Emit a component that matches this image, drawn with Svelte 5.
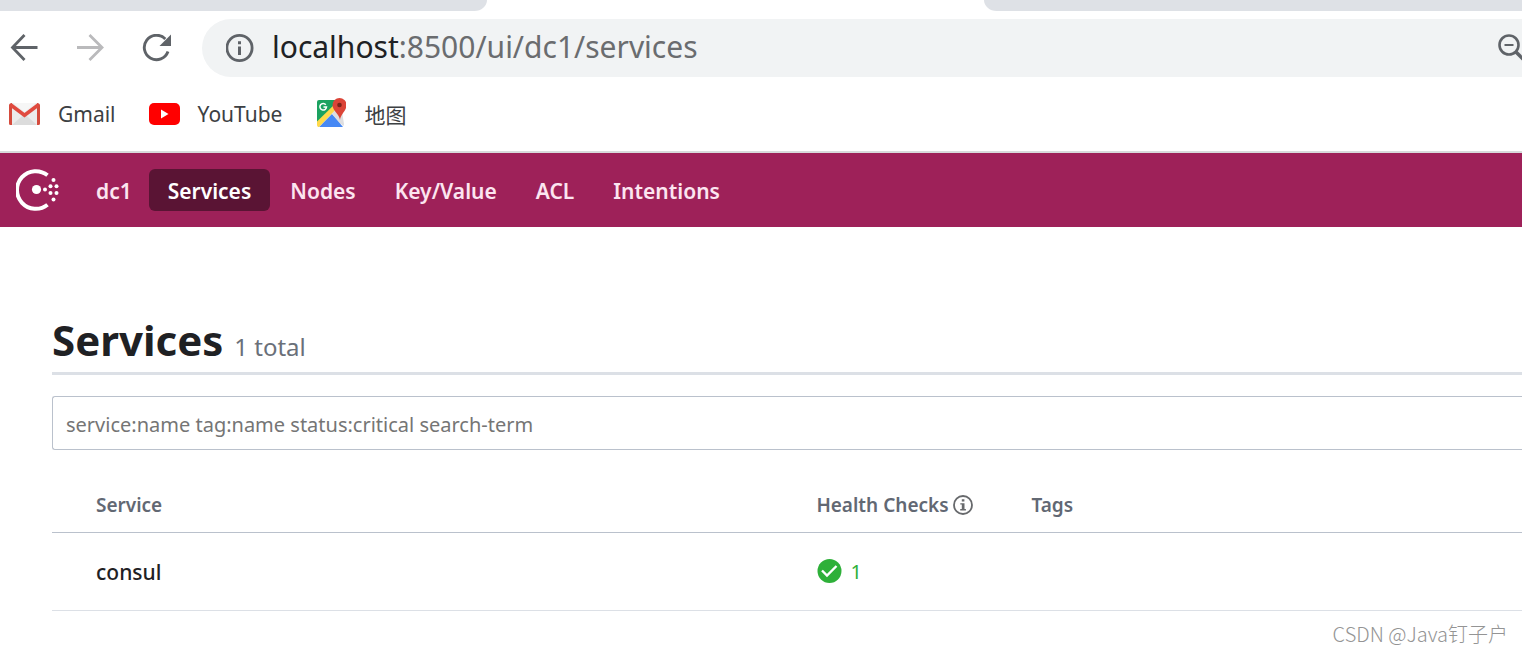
<script>
	let search = ''
	let active = 'Services'

	let bookmarks = [
		{id: 'gmail', name: 'Gmail'},
		{id: 'youtube', name: 'YouTube'},
		{id: 'maps', name: '地图'},
	]
	let links = ['Services', 'Nodes', 'Key/Value', 'ACL', 'Intentions']
	let services = [
		{id: 1, name: 'consul', passing: 1, tags: []},
	]
</script>

<div class="tabs">
	<div class="tab left"></div>
	<div class="current"></div>
	<div class="tab right"></div>
</div>

<div class="toolbar">
	<button class="tool" aria-label="Back">
		<svg width="28" height="28" viewBox="0 0 28 28" fill="none" stroke="#5f6368" stroke-width="2.8">
			<path d="M27.500 13.500H3M14.500 1L2.500 13.500l12 12.500" />
		</svg>
	</button>
	<button class="tool" aria-label="Forward">
		<svg width="28" height="28" viewBox="0 0 28 28" fill="none" stroke="#bababc" stroke-width="2.8">
			<path d="M1 13.500h24.500M13.500 1L26 13.500 13.500 26" />
		</svg>
	</button>
	<button class="tool" aria-label="Reload">
		<svg width="30" height="28" viewBox="0 0 30 28">
			<path d="M26 17.500A12.200 12.200 0 1 1 23.300 5" fill="none" stroke="#5f6368" stroke-width="2.9" />
			<path d="M29 .5v11.500H17.500z" fill="#5f6368" />
		</svg>
	</button>
	<div class="omnibox">
		<button class="tool" aria-label="View site information">
			<svg width="28" height="28" viewBox="0 0 28 28">
				<circle cx="13.500" cy="14" r="12.600" fill="none" stroke="#5f6368" stroke-width="2.8" />
				<path d="M12 7.200h3v3h-3zM12 12.500h3v8.500h-3z" fill="#5f6368" />
			</svg>
		</button>
		<div class="url" role="textbox" tabindex="0" aria-label="Address" contenteditable="true"><span>localhost</span>:8500/ui/dc1/services</div>
		<button class="tool zoom" aria-label="Zoom">
			<svg width="24" height="30" viewBox="0 0 24 30" fill="none" stroke="#5f6368">
				<circle cx="11" cy="12" r="9.500" stroke-width="2.6" />
				<path d="M6.500 12h9" stroke-width="2" />
				<path d="M17.500 18.500l8 8" stroke-width="3.6" />
			</svg>
		</button>
	</div>
</div>

<nav class="bookmarks" aria-label="Bookmarks">
	{#each bookmarks as b (b.id)}
		<a href="#{b.id}">
			{#if b.id === 'gmail'}
				<svg width="32" height="32" viewBox="0 0 32 32">
					<path d="M3 5h27v22H3z" fill="#ececec" />
					<path d="M4 27l12.500-11L29 27z" fill="#dcdcdc" />
					<path d="M5 5h23L16.500 14z" fill="#f6f6f6" />
					<path d="M1 7.500Q1 5 4 5v22H2.500Q1 27 1 25.500zM32 7.500Q32 5 29 5v22h1.500q1.500 0 1.500-1.500z" fill="#d54b3d" />
					<path d="M2.500 6.800l14 10.500 14-10.500" fill="none" stroke="#e04a3f" stroke-width="3.6" />
				</svg>
			{:else if b.id === 'youtube'}
				<svg width="32" height="32" viewBox="0 0 32 32">
					<rect x="1" y="5" width="31" height="22" rx="5" fill="#f00" />
					<path d="M13 11.500v9l7.500-4.500z" fill="#fff" />
				</svg>
			{:else}
				<svg width="32" height="32" viewBox="-1 2 32 32">
					<path d="M4 4h22v24H4z" fill="#e4e4e6" />
					<path d="M2 6q0-2 2-2h21L2 27z" fill="#1ba260" />
					<path d="M4 31L17 18l11 13z" fill="#4688f4" />
					<path d="M2 25.500L21 7l3 3L4 31H3q-1-1-1-2z" fill="#ffd94a" />
					<path d="M17 18l9-9 3 19q0 2-1 2z" fill="#dedee0" />
					<path d="M10.800 8.700A3.300 3.300 0 1 0 11.500 11H8.500" fill="none" stroke="#fff" stroke-width="1.5" />
					<path d="M25 24c-.5-6-7.500-9-7.500-15a7 7 0 0 1 14 0C31.500 15 25.500 18 25 24z" fill="#db4437" />
					<circle cx="24.500" cy="9" r="2.300" fill="#7b2319" />
				</svg>
			{/if}
			{b.name}
		</a>
	{/each}
</nav>

<header>
	<a class="logo" href="#home" aria-label="Consul">
		<svg width="44" height="42" viewBox="0 0 44 42" fill="#fff">
			<path d="M31.500 6.300A18.800 18.800 0 1 0 31.500 35.700" fill="none" stroke="#fff" stroke-width="4" />
			<circle cx="20.500" cy="20.500" r="4.600" />
			<circle cx="29" cy="20.500" r="2" />
			<circle cx="34.500" cy="17.300" r="2" />
			<circle cx="34.500" cy="24" r="2" />
			<circle cx="40.500" cy="17.300" r="2" />
			<circle cx="40.500" cy="24" r="2" />
			<circle cx="37.500" cy="11" r="2" />
			<circle cx="37.500" cy="30.500" r="2" />
		</svg>
	</a>
	<nav class="main-nav" aria-label="Main">
		<a class="dc" href="#dc1">dc1</a>
		{#each links as link}
			<a href="#{link}" class:active={active === link} on:click={() => active = link}>{link}</a>
		{/each}
	</nav>
</header>

<main>
	<h1>Services <em>1 total</em></h1>
	<input type="search" bind:value={search} aria-label="Search services" placeholder="service:name tag:name status:critical search-term">
	<table>
		<thead>
			<tr>
				<th class="name">Service</th>
				<th class="health">
					<span>Health Checks
						<svg width="20" height="20" viewBox="0 0 20 20">
							<circle cx="10" cy="10" r="9" fill="none" stroke="#67696c" stroke-width="1.8" />
							<path d="M8.800 4.200h2.600v2.300H8.800zM7.300 8.200h4.200v5.700h1.400v1.500H7.200v-1.500h1.600V9.600H7.300z" fill="#67696c" />
						</svg>
					</span>
				</th>
				<th>Tags</th>
			</tr>
		</thead>
		<tbody>
			{#each services.filter(s => s.name.includes(search)) as s (s.id)}
				<tr>
					<td class="name"><a href="#{s.name}">{s.name}</a></td>
					<td class="health">
						<span class="passing">
							<svg width="26" height="26" viewBox="0 0 26 26">
								<circle cx="13.500" cy="12" r="12" fill="#2eb039" />
								<path d="M6 11.500l5 5 9.500-9.500" fill="none" stroke="#fff" stroke-width="2.4" />
							</svg>
							{s.passing}
						</span>
					</td>
					<td>{s.tags.join(', ')}</td>
				</tr>
			{/each}
		</tbody>
	</table>
</main>

<footer>CSDN @Java钉子户</footer>

<style>
	:global(body) {
		background: #fff;
		color: #1f2124;
		font-family: "Noto Sans", "Noto Sans CJK SC", sans-serif;
		overflow-x: hidden;
	}
	a {
		color: inherit;
		text-decoration: none;
	}
	svg {
		display: block;
		flex: none;
	}
	.tabs {
		display: flex;
		height: 11px;
	}
	.tab {
		background: #dee1e6;
	}
	.left {
		width: 32%;
		border-bottom-right-radius: 16px 14px;
	}
	.current {
		width: 497px;
	}
	.right {
		flex: 1;
		border-bottom-left-radius: 16px 14px;
	}
	.toolbar {
		display: flex;
		align-items: center;
		padding: 8px 0 0 10px;
		gap: 38px;
	}
	.tool {
		display: flex;
		padding: 0;
		border: 0;
		background: none;
	}
	.omnibox {
		flex: 1;
		display: flex;
		align-items: center;
		height: 58px;
		margin-left: -8px;
		padding-left: 24px;
		border-radius: 29px 0 0 29px;
		background: #f1f3f4;
	}
	.url {
		flex: 1;
		margin-left: 18px;
		padding-bottom: 2px;
		font-size: 30px;
		line-height: 40px;
		color: #6a6c6f;
		outline: 0;
	}
	.url span {
		color: #202124;
	}
	.bookmarks {
		display: flex;
		gap: 32px;
		padding: 16px 8px 17px;
		height: 41px;
		border-bottom: 2px solid #d8dadb;
	}
	.bookmarks a {
		display: flex;
		align-items: center;
		gap: 18px;
		font-size: 21px;
		color: #3c4043;
	}
	header {
		display: flex;
		align-items: center;
		height: 74px;
		padding-left: 16px;
		background: #9e2159;
	}
	.main-nav {
		display: flex;
		gap: 1px;
		margin-left: 17px;
	}
	.main-nav a {
		padding: 2px 19px 0;
		border-radius: 6px;
		font-size: 21px;
		font-weight: 600;
		line-height: 40px;
		color: #fce5f0;
	}
	.main-nav .dc {
		padding-right: 16px;
	}
	.main-nav .active {
		background: #5a1434;
		color: #fff;
	}
	main {
		padding: 84px 0 0 52px;
	}
	h1 {
		margin: 0 0 21px;
		padding-bottom: 4px;
		border-bottom: 3px solid #dce0e6;
		font-size: 42px;
		line-height: 57px;
	}
	em {
		font-size: 24px;
		line-height: 24px;
		font-style: normal;
		font-weight: 400;
		color: #6a7079;
	}
	input {
		display: block;
		box-sizing: border-box;
		width: 100%;
		height: 54px;
		padding: 2px 13px 0;
		border: 1px solid #bac1cc;
		border-right: 0;
		border-radius: 3px 0 0 3px;
		font: 20px "Noto Sans", sans-serif;
		color: #1f2124;
		outline: 0;
		appearance: none;
	}
	input::placeholder {
		color: #757575;
	}
	table {
		width: 100%;
		margin-top: 27px;
		border-collapse: collapse;
		table-layout: fixed;
	}
	th, td {
		padding: 0;
		text-align: left;
		font-size: 21px;
	}
	th {
		height: 55px;
		border-bottom: 1px solid #bac1cc;
		font-size: 19px;
		font-weight: 600;
		color: #626873;
	}
	td {
		height: 77px;
		border-bottom: 1px solid #dce0e6;
		font-weight: 500;
	}
	.name {
		width: 52%;
		box-sizing: border-box;
		padding-left: 44px;
	}
	.health {
		width: 215px;
	}
	.health span {
		display: flex;
		align-items: center;
		gap: 4px;
	}
	.health .passing {
		gap: 8px;
		font-size: 20px;
		font-weight: 400;
		color: #2eb039;
	}
	footer {
		padding: 9px 14px 0 0;
		font: 300 20px/28px "Noto Sans CJK SC", sans-serif;
		text-align: right;
		color: #949494;
	}
</style>
